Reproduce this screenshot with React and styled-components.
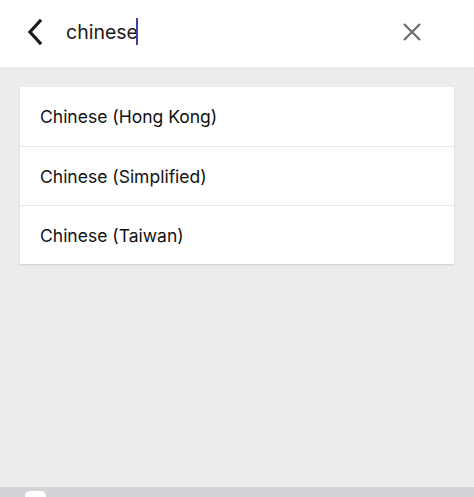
import React from 'react';
import styled, { createGlobalStyle } from 'styled-components';

const results = ['Chinese (Hong Kong)', 'Chinese (Simplified)', 'Chinese (Taiwan)'];

const App = () => {
  return (
    <Page>
      <GlobalStyle />
      <Header>
        <IconButton aria-label="back">
          <svg width="18" height="26" viewBox="0 0 18 26">
            <path d="M14 2 L4 13 L14 24" fill="none" stroke="#1c1c1c" strokeWidth="3.2" strokeLinecap="square" />
          </svg>
        </IconButton>
        <Query>
          chinese<Caret />
        </Query>
        <CloseButton aria-label="clear">
          <svg width="20" height="20" viewBox="0 0 20 20">
            <path d="M2 2 L18 18 M18 2 L2 18" stroke="#6b6b6b" strokeWidth="2.2" />
          </svg>
        </CloseButton>
      </Header>
      <Main>
        <Card>
          {results.map(item => (
            <Row key={item}>{item}</Row>
          ))}
        </Card>
      </Main>
      <Keyboard>
        <Key />
      </Keyboard>
    </Page>
  );
};

export default App;

//styles

const GlobalStyle = createGlobalStyle`
  html, body {
    margin: 0;
    padding: 0;
    background: #ececec;
  }
  * {
    box-sizing: border-box;
  }
`;

const Page = styled.div`
  display: flex;
  flex-direction: column;
  height: 497px;
  font-family: Inter, 'Liberation Sans', sans-serif;
  color: #1f1f1f;
`;

const Header = styled.header`
  display: flex;
  align-items: center;
  height: 67px;
  padding: 0 0 4px 26px;
  background: #fff;
`;

const IconButton = styled.button`
  display: flex;
  align-items: center;
  border: none;
  background: none;
  padding: 0;
`;

const Query = styled.div`
  display: flex;
  align-items: center;
  margin-left: 22px;
  font-size: 19.5px;
  color: #1a1a1a;
  flex: 1;
`;

const Caret = styled.span`
  display: inline-block;
  width: 2px;
  height: 27px;
  margin-left: -2px;
  background: #3b43a6;
`;

const CloseButton = styled.button`
  display: flex;
  border: none;
  background: none;
  padding: 0;
  margin: 0 52px 0 0;
`;

const Main = styled.main`
  flex: 1;
  padding: 20px 20px 0;
`;

const Card = styled.div`
  background: #fff;
  box-shadow: 0 1px 2px rgba(0, 0, 0, 0.14);
`;

const Row = styled.div`
  display: flex;
  align-items: center;
  height: 59px;
  padding-left: 20px;
  font-size: 17.5px;
  color: #111;
  & + & {
    border-top: 1px solid #e7e7e7;
  }
`;

const Keyboard = styled.div`
  height: 10px;
  padding-left: 25px;
  background: #d3d3d8;
  overflow: hidden;
`;

const Key = styled.div`
  width: 21px;
  height: 14px;
  margin-top: 4px;
  border-radius: 5px;
  background: #fff;
`;
